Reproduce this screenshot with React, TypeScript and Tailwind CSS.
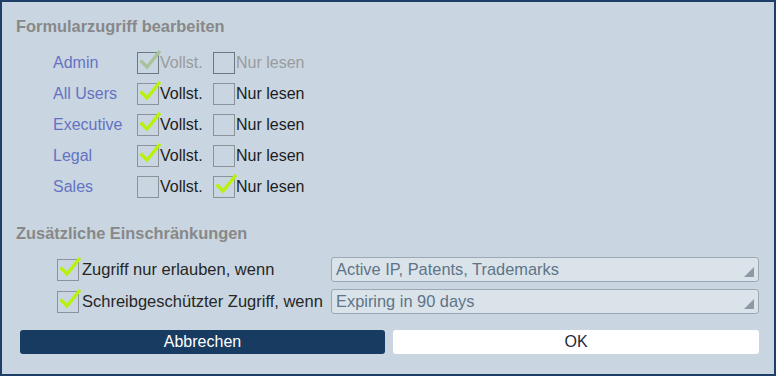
import React from 'react';

type Access = { name: string; full: boolean; read: boolean; disabled?: boolean };

const rows: Access[] = [
  { name: 'Admin', full: true, read: false, disabled: true },
  { name: 'All Users', full: true, read: false },
  { name: 'Executive', full: true, read: false },
  { name: 'Legal', full: true, read: false },
  { name: 'Sales', full: false, read: true },
];

const Check: React.FC<{ checked: boolean; disabled?: boolean }> = ({ checked, disabled }) => (
  <span
    className={`relative inline-block w-[22px] h-[22px] shrink-0 border ${
      disabled ? 'border-[#6d7884]' : 'border-[#8b9299]'
    }`}
  >
    {checked && (
      <svg
        viewBox="0 0 22 22"
        className="absolute left-[-1px] top-[-1px] w-[22px] h-[22px] overflow-visible"
      >
        <polyline
          points="3.5,8.5 10,15 23,-1"
          fill="none"
          stroke={disabled ? '#a9c39c' : '#b8f20c'}
          strokeWidth="3.4"
        />
      </svg>
    )}
  </span>
);

const Option: React.FC<{ label: string; checked: boolean; disabled?: boolean }> = ({
  label,
  checked,
  disabled,
}) => (
  <div className="flex items-center w-[76px] whitespace-nowrap">
    <Check checked={checked} disabled={disabled} />
    <span className={`pl-[1px] ${disabled ? 'text-[#999b9d]' : 'text-[#1c1c1c]'}`}>{label}</span>
  </div>
);

const Select: React.FC<{ value: string }> = ({ value }) => (
  <div className="relative w-[428px] h-[25px] rounded-[3px] border border-[#9ca8b3] bg-[#dae3ea] pl-[4px] leading-[22px] text-[16.4px] text-[#5e7488]">
    {value}
    <svg viewBox="0 0 10 10" className="absolute right-[4px] bottom-[4px] w-[10px] h-[10px]">
      <polygon points="10,0 10,10 0,10" fill="#8c99a5" />
    </svg>
  </div>
);

export default function App() {
  return (
    <div
      className="w-[777px] h-[377px] bg-white"
      style={{ fontFamily: '"Liberation Sans", Arial, sans-serif' }}
    >
      <div className="w-[776px] h-[376px] border-2 border-[#1d3e66] bg-[#c9d6e1] text-[16px]">
        <h2 className="pt-[15px] pl-[14px] h-[33px] leading-[18px] font-bold text-[16.4px] text-[#888888]">
          Formularzugriff bearbeiten
        </h2>

        <div className="mt-[12px] pl-[51px]">
          {rows.map((r) => (
            <div key={r.name} className="flex items-center h-[31px]">
              <span className="w-[84px] text-[#6572c2]">{r.name}</span>
              <Option label="Vollst." checked={r.full} disabled={r.disabled} />
              <Option label="Nur lesen" checked={r.read} disabled={r.disabled} />
            </div>
          ))}
        </div>

        <h2 className="mt-[22px] pl-[14px] h-[18px] leading-[18px] font-bold text-[16.4px] text-[#888888]">
          Zusätzliche Einschränkungen
        </h2>

        <div className="mt-[15px] flex flex-col gap-[7px]">
          {['Zugriff nur erlauben, wenn', 'Schreibgeschützter Zugriff, wenn'].map((label, i) => (
            <div key={label} className="flex items-center h-[25px]">
              <div className="w-[329px] pl-[55px] flex items-center whitespace-nowrap text-[16.5px] text-[#262626]">
                <Check checked />
                <span className="pl-[3px]">{label}</span>
              </div>
              <Select value={i === 0 ? 'Active IP, Patents, Trademarks' : 'Expiring in 90 days'} />
            </div>
          ))}
        </div>

        <div className="mt-[16px] pl-[18px] flex gap-[8px]">
          <button className="w-[365px] h-[24px] rounded-[3px] bg-[#173b61] text-white">
            Abbrechen
          </button>
          <button className="w-[366px] h-[24px] rounded-[3px] bg-white text-[#1b2a3c]">
            OK
          </button>
        </div>
      </div>
    </div>
  );
}
